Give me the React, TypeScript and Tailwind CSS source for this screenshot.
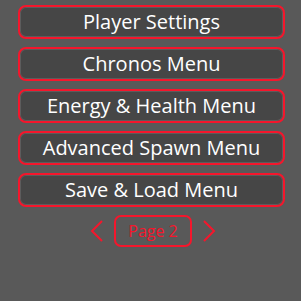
import React from 'react'

const items = [
  'Player Settings',
  'Chronos Menu',
  'Energy & Health Menu',
  'Advanced Spawn Menu',
  'Save & Load Menu',
]

export default function App() {
  return (
    <div
      className="w-[301px] h-[301px] bg-[#595959] pt-[5px] pl-[18px]"
      style={{ fontFamily: '"Open Sans", "Liberation Sans", sans-serif' }}
    >
      <div className="flex flex-col gap-[8px] w-[267px]">
        {items.map((label) => (
          <div
            key={label}
            className="h-[34px] rounded-[8px] border-2 border-[#f5162c] bg-[#464646] shadow-[inset_0_0_0_1px_#5c5c5c] flex items-center justify-center text-white text-[20px] leading-none"
          >
            {label}
          </div>
        ))}
      </div>
      <div className="flex items-center mt-[8px] ml-[72px] gap-[10px]">
        <svg width="14" height="22" viewBox="0 0 14 22" className="text-[#f5162c]">
          <path d="M12 1 L2 11 L12 21" fill="none" stroke="currentColor" strokeWidth="2" />
        </svg>
        <div className="w-[78px] h-[32px] rounded-[7px] border-2 border-[#f5162c] flex items-center justify-center text-[#f5162c] text-[16px]">
          Page 2
        </div>
        <svg width="14" height="22" viewBox="0 0 14 22" className="text-[#f5162c]">
          <path d="M2 1 L12 11 L2 21" fill="none" stroke="currentColor" strokeWidth="2" />
        </svg>
      </div>
    </div>
  )
}
